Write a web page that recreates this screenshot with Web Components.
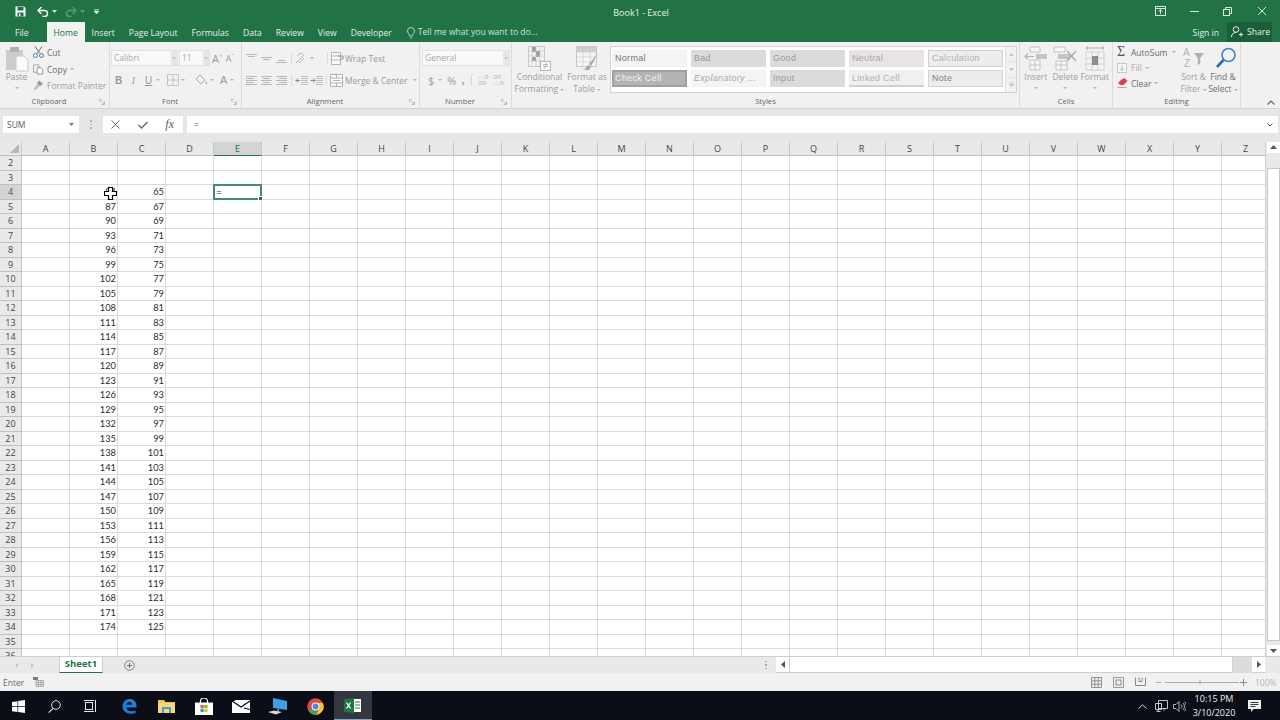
<!DOCTYPE html>
<html>
<head>
<meta charset="utf-8">
<title>Book1 - Excel</title>
<style>
    html, body { margin: 0; height: 720px; overflow: hidden; }
    body { display: flex; flex-direction: column; font-family: 'Open Sans', 'Noto Sans', sans-serif; font-size: 8.5px; }
</style>
</head>
<body>
<xl-titlebar></xl-titlebar>
<xl-tabs></xl-tabs>
<xl-ribbon></xl-ribbon>
<xl-formula-bar></xl-formula-bar>
<xl-sheet></xl-sheet>
<xl-sheet-tabs></xl-sheet-tabs>
<xl-status-bar></xl-status-bar>
<xl-taskbar></xl-taskbar>
<script>
// base: every element only gives its styles and markup
class XlElement extends HTMLElement {
    constructor() {
        super();
        this.attachShadow({ mode: 'open' });
    }
    getStyles() { return ''; }
    getMarkup() { return ''; }
    connectedCallback() {
        const template = document.createElement('template');
        template.innerHTML = `<style>${this.getStyles()}</style>${this.getMarkup()}`;
        this.shadowRoot.appendChild(template.content.cloneNode(true));
    }
}

class XlTitlebar extends XlElement {
    getStyles() {
        return `
        :host { display: flex; align-items: center; height: 22px; background: #217346; color: #fff; position: relative; flex: none; }
        svg { display: block; flex: none; }
        .qat { display: flex; align-items: center; padding-left: 15px; width: 100px; box-sizing: border-box; }
        .title { position: absolute; left: 0; right: 0; top: 0; line-height: 25px; text-align: center; font-size: 9px; padding-left: 2px; color: #e6f0ea; }
        .win { margin-left: auto; display: flex; align-items: center; padding-right: 1px; }
        .win svg { margin: 0 10px; }
        `;
    }
    getMarkup() {
        return `
        <div class="qat">
            <svg width="11" height="11" viewBox="0 0 11 11" style="margin-right:11px"><path d="M0.5 0.5h8.5l1.5 1.500v8.500h-10z" fill="#fff"/><rect x="2.5" y="1" width="6" height="3.5" fill="#217346"/><rect x="2.5" y="6.5" width="6" height="4" fill="#217346"/><rect x="4" y="7.5" width="1.5" height="2.5" fill="#fff"/></svg>
            <svg width="12" height="11" viewBox="0 0 12 11" style="margin-right:3px"><path d="M1.5 4.5h6a3 3 0 0 1 0 6h-2" fill="none" stroke="#fff" stroke-width="1.4"/><path d="M4.5 1l-3.5 3.500 3.500 3.500" fill="none" stroke="#fff" stroke-width="1.4"/></svg>
            <svg width="5" height="3" viewBox="0 0 5 3" style="margin-right:8px"><path d="M0 0h5l-2.5 3z" fill="#d8e6dd"/></svg>
            <svg width="12" height="11" viewBox="0 0 12 11" style="margin-right:3px"><path d="M10.5 4.5h-6a3 3 0 0 0 0 6h2" fill="none" stroke="#5e9a79" stroke-width="1.3"/><path d="M7.5 1l3.500 3.500-3.500 3.500" fill="none" stroke="#5e9a79" stroke-width="1.3"/></svg>
            <svg width="5" height="3" viewBox="0 0 5 3" style="margin-right:9px"><path d="M0 0h5l-2.5 3z" fill="#5e9a79"/></svg>
            <svg width="5" height="5" viewBox="0 0 5 5"><path d="M0 0.5h5M0 2h5l-2.5 3z" fill="#e6f0ea" stroke="#e6f0ea" stroke-width="0.6"/></svg>
        </div>
        <div class="title">Book1 - Excel</div>
        <div class="win">
            <svg width="11" height="10" viewBox="0 0 11 10"><rect x="0.5" y="0.5" width="10" height="9" fill="none" stroke="#d8e6dd"/><path d="M0.5 2.5h10" stroke="#d8e6dd"/><path d="M5.5 8v-4M3.5 5.5l2-2 2 2" fill="none" stroke="#d8e6dd"/></svg>
            <span style="width:1px"></span>
            <svg width="11" height="10" viewBox="0 0 11 10" style="margin-left:12px"><path d="M1 5.5h9" stroke="#d8e6dd"/></svg>
            <svg width="9" height="9" viewBox="0 0 9 9" style="margin-left:13px"><rect x="0.5" y="2.5" width="6" height="6" fill="none" stroke="#d8e6dd"/><path d="M2.5 2.5v-2h6v6h-2" fill="none" stroke="#d8e6dd"/></svg>
            <svg width="10" height="10" viewBox="0 0 10 10" style="margin-left:15px;margin-right:12px"><path d="M1 1l8 8M9 1l-8 8" stroke="#d8e6dd"/></svg>
        </div>
        `;
    }
}

class XlTabs extends XlElement {
    getStyles() {
        return `
        :host { display: flex; align-items: stretch; height: 20px; background: #217346; color: #e4efe8; flex: none; line-height: 23px; font-size: 8.6px; }
        .t { padding: 0 7px; white-space: nowrap; }
        .file { margin-left: 8px; margin-right: 11px; }
        .home { background: #f1f1f1; color: #217346; padding: 0; width: 38px; text-align: center; box-sizing: border-box; height: 21px; }
        .tell { display: flex; align-items: center; color: #cfe2d6; padding-left: 8px; }
        .tell svg { margin-right: 3px; margin-top: 1px; }
        .right { margin-left: auto; display: flex; align-items: stretch; padding-right: 8px; }
        .sign { padding-right: 8px; }
        .share { background: #1b5e3a; display: flex; align-items: center; padding-left: 4px; gap: 4px; height: 20px; width: 45px; box-sizing: border-box; }
        `;
    }
    getMarkup() {
        const names = ['Insert', 'Page Layout', 'Formulas', 'Data', 'Review', 'View', 'Developer'];
        return `
        <div class="t file">File</div>
        <div class="t home">Home</div>
        ${names.map(n => `<div class="t">${n}</div>`).join('')}
        <div class="tell">
            <svg width="8" height="12" viewBox="0 0 8 12"><path d="M2.5 9c0-2-2-3-2-5a3.500 3.500 0 0 1 7 0c0 2-2 3-2 5zM3 11h2" fill="none" stroke="#d8e6dd" stroke-width="0.8"/></svg>
            Tell me what you want to do...
        </div>
        <div class="right">
            <div class="sign">Sign in</div>
            <div class="share">
                <svg width="12" height="12" viewBox="0 0 12 12"><circle cx="5" cy="3.5" r="2.8" fill="none" stroke="#e4efe8"/><path d="M0.5 11c0-3 2-4.500 4.500-4.500M8 8.500h4M10 6.500v4" fill="none" stroke="#e4efe8"/></svg>
                <span>Share</span>
            </div>
        </div>
        `;
    }
}

class XlRibbonGroup extends XlElement {
    getStyles() {
        return `
        :host { display: flex; flex-direction: column; box-sizing: border-box; height: 66px; border-right: 1px solid #dcdcdc; flex: none; position: relative; }
        :host([launch]) .label { padding-right: 11px; }
        .body { flex: 1; display: flex; min-height: 0; }
        .label { height: 14px; line-height: 15px; text-align: center; color: #666; font-size: 7.7px; }
        .launch { position: absolute; right: 4px; bottom: 3px; display: block; }
        `;
    }
    getMarkup() {
        const launch = this.hasAttribute('launch')
            ? '<svg class="launch" width="6" height="6" viewBox="0 0 6 6"><path d="M0.5 2.5v-2h2M2 2l3 3M5.5 2.5v3h-3" fill="none" stroke="#a8a8a8" stroke-width="0.8"/></svg>'
            : '';
        return `<div class="body"><slot></slot></div><div class="label">${this.getAttribute('label')}</div>${launch}`;
    }
}

class XlRibbon extends XlElement {
    getStyles() {
        return `
        :host { display: flex; height: 66px; background: #f1f1f1; border-bottom: 1px solid #d2d2d2; flex: none; color: #8f8f8f; font-size: 8.5px; position: relative; box-sizing: content-box; }
        svg { display: block; flex: none; }
        .caret { display: inline-block; width: 0; height: 0; border: 2px solid transparent; border-top: 2.5px solid #b4b4b4; border-bottom: 0; vertical-align: middle; }
        .big { display: flex; flex-direction: column; align-items: center; text-align: center; line-height: 12px; color: #a0a0a0; font-size: 8.5px; white-space: nowrap; }
        .big > .caret { display: block; margin: 4px auto 0; }
        .small-col { display: flex; flex-direction: column; }
        .row { display: flex; align-items: center; height: 16px; white-space: nowrap; }
        .drop { box-sizing: border-box; height: 16px; background: #f9f9f9; border: 1px solid #e2e2e2; color: #a9a9a9; line-height: 14px; padding-left: 2px; position: relative; font-size: 8.5px; }
        .drop i { position: absolute; right: 0; top: 0; bottom: 0; width: 6px; background: #e6e6e6; }
        .drop i::after { content: ''; position: absolute; left: 1px; top: 6px; border: 2px solid transparent; border-top: 2px solid #c0c0c0; border-bottom: 0; }

        .clip { width: 110px; }
        .clip .big { width: 33px; padding-top: 4px; flex: none; color: #9a9a9a; }
        .clip .small-col { padding-top: 3px; color: #777; }
        .clip .row { gap: 3px; height: 14px; }
        .font { width: 132px; }
        .font .rows { padding: 8px 0 0 1px; display: flex; flex-direction: column; gap: 6px; }
        .align { width: 178px; }
        .align .rows { padding: 8px 0 0 3px; display: flex; flex-direction: column; gap: 6px; }
        .num { width: 92px; }
        .num .rows { padding: 8px 0 0 2px; display: flex; flex-direction: column; gap: 6px; }
        .sep { width: 1px; height: 12px; background: #dcdcdc; margin: 0 3px; flex: none; }

        .styles { width: 508px; }
        .styles .big { padding-top: 4px; }
        .gallery { margin: 4px 0 0 0; width: 407px; height: 47px; box-sizing: border-box; background: #fff; border: 1px solid #d4d4d4; display: flex; }
        .cells { flex: 1; display: grid; grid-template-columns: repeat(5, 75px); grid-template-rows: 17px 17px; column-gap: 4px; row-gap: 3px; padding: 3px 0 0 1px; font-family: 'Liberation Sans', sans-serif; font-size: 9px; letter-spacing: 0.3px; }
        .cells div { box-sizing: border-box; line-height: 16px; padding-left: 3px; color: #8a8a8a; white-space: nowrap; overflow: hidden; }
        .scroll { width: 10px; display: flex; flex-direction: column; background: #f1f1f1; border-left: 1px solid #e2e2e2; margin-left: 2px; }
        .scroll span { flex: 1; border-bottom: 1px solid #e2e2e2; display: flex; align-items: center; justify-content: center; }

        .cell-group { width: 93px; }
        .cell-group .big { width: 29.5px; padding-top: 4px; }
        .edit { width: 128px; }
        .edit .big { padding-top: 4px; }
        .edit .small-col { padding: 2px 0 0 4px; color: #777; width: 66px; box-sizing: border-box; flex: none; }
        .collapse { position: absolute; right: 5px; bottom: 3px; }
        `;
    }
    getMarkup() {
        const caret = '<span class="caret"></span>';
        const g = '#a9a9a9';
        const lines = (rows) => `<svg width="13" height="11" viewBox="0 0 13 11">${rows.map(r => `<path d="M${r[0]} ${r[2]}H${r[1]}" stroke="${g}" stroke-width="0.8"/>`).join('')}</svg>`;
        return `
        <xl-ribbon-group class="clip" label="Clipboard" launch>
            <div style="display:flex">
                <div class="big">
                    <svg width="24" height="26" viewBox="0 0 24 26" style="margin-bottom:-1px"><rect x="1" y="4" width="17" height="20" fill="#cdcdcd"/><rect x="5" y="1" width="9" height="5" fill="#b0b0b0"/><path d="M11 10h8l4 4v11H11z" fill="#fbfbfb" stroke="#c8c8c8"/></svg>
                    <span>Paste</span>${caret}
                </div>
                <div class="small-col">
                    <div class="row"><svg width="11" height="12" viewBox="0 0 11 12"><path d="M2 0.5l5 7M9 0.5l-5 7" stroke="#6d6d6d" fill="none"/><circle cx="2.5" cy="9.5" r="2" fill="none" stroke="#4f7fa8"/><circle cx="8.5" cy="9.5" r="2" fill="none" stroke="#4f7fa8"/></svg><span style="color:#6b6b6b">Cut</span></div>
                    <div class="row" style="margin-top:3px"><svg width="11" height="11" viewBox="0 0 12 11"><path d="M0.5 0.5h6v8h-6z" fill="#f4f4f4" stroke="#a0a0a0"/><path d="M4.5 3.5h4l2 2v5h-6z" fill="#fff" stroke="#909090"/></svg><span style="color:#6b6b6b">Copy</span>${caret}</div>
                    <div class="row" style="margin-top:2.5px"><svg width="11" height="11" viewBox="0 0 11 11"><path d="M6 0.5l4 3-3 3-3-3z" fill="#9a9a9a"/><path d="M4 4l2.5 2.500L3 10 0.5 9z" fill="#c4c4c4"/></svg><span style="color:#a0a0a0">Format Painter</span></div>
                </div>
            </div>
        </xl-ribbon-group>

        <xl-ribbon-group class="font" label="Font" launch>
            <div class="rows">
                <div class="row">
                    <div class="drop" style="width:67px">Calibri<i></i></div>
                    <div class="drop" style="width:31px;margin-left:1px">11<i></i></div>
                    <span style="color:#9c9c9c;font-size:11px;margin-left:2px">A<sup style="font-size:6px;line-height:0">^</sup></span>
                    <span style="color:#9c9c9c;font-size:9.5px;margin-left:3px">A<sup style="font-size:6px;line-height:0">ˇ</sup></span>
                </div>
                <div class="row" style="font-size:10px;color:#9a9a9a">
                    <b style="width:15px;text-align:center;font-family:'Liberation Sans'">B</b>
                    <i style="width:15px;text-align:center;font-family:'Liberation Serif'">I</i>
                    <u style="width:15px;text-align:center;font-family:'Liberation Sans'">U</u>
                    ${caret}
                    <svg width="12" height="12" viewBox="0 0 12 12" style="margin-left:7px"><path d="M0.5 0.5h11v11h-11zM6 0.5v11M0.5 6h11" fill="none" stroke="#c4c4c4"/></svg>
                    <span style="margin-left:2px;line-height:0">${caret}</span>
                    <svg width="13" height="12" viewBox="0 0 13 12" style="margin-left:10px"><path d="M5 1l5 5-4 4-5-5z" fill="none" stroke="#a9a9a9"/><path d="M11 7c1 1.500 1.500 2.500 0.5 3.500-1 0-1-2-0.5-3.500z" fill="#a9a9a9"/></svg>
                    <span style="margin-left:2px;line-height:0">${caret}</span>
                    <span style="margin-left:6px;font-size:11px;font-family:'Liberation Sans'">A</span>
                    <span style="margin-left:3px;line-height:0">${caret}</span>
                </div>
            </div>
        </xl-ribbon-group>

        <xl-ribbon-group class="align" label="Alignment" launch>
            <div class="rows">
                <div class="row">
                    ${lines([[1, 12, 1.5], [3, 10, 3.5]])}
                    <span style="width:2px"></span>${lines([[1, 12, 4.5], [3, 10, 6.5]])}
                    <span style="width:2px"></span>${lines([[3, 10, 7.5], [1, 12, 9.5]])}
                    <div class="sep"></div>
                    <svg width="12" height="12" viewBox="0 0 12 12"><path d="M1 11L8 4M4 11L9 6M2 4l4-3 3 3" fill="none" stroke="#b4b4b4"/></svg>
                    <span style="margin-left:3px;line-height:0">${caret}</span>
                    <div class="sep" style="margin:0 1px 0 13px"></div>
                    <svg width="13" height="13" viewBox="0 0 13 13" style="margin-left:2px"><path d="M0.5 0.5h9v12h-9zM0.5 4h9M0.5 8h9" fill="#fafafa" stroke="#b4b4b4"/><path d="M7 4h5v3h-3" fill="none" stroke="#909090"/></svg>
                    <span style="margin-left:1px;color:#9a9a9a">Wrap Text</span>
                </div>
                <div class="row">
                    ${lines([[1, 12, 1.5], [1, 9, 3.5], [1, 12, 5.5], [1, 9, 7.5], [1, 12, 9.5]])}
                    <span style="width:2px"></span>${lines([[1, 12, 1.5], [3, 10, 3.5], [1, 12, 5.5], [3, 10, 7.5], [1, 12, 9.5]])}
                    <span style="width:2px"></span>${lines([[1, 12, 1.5], [4, 12, 3.5], [1, 12, 5.5], [4, 12, 7.5], [1, 12, 9.5]])}
                    <div class="sep"></div>
                    <svg width="13" height="11" viewBox="0 0 13 11"><path d="M6 1.5h7M6 3.5h7M6 5.5h7M6 7.5h7M6 9.5h7" stroke="#b4b4b4" stroke-width="0.8"/><path d="M5 5.5H0.5M3 3.5l-2 2 2 2" fill="none" stroke="#6f93b5"/></svg>
                    <svg width="13" height="11" viewBox="0 0 13 11" style="margin-left:2px"><path d="M6 1.5h7M6 3.5h7M6 5.5h7M6 7.5h7M6 9.5h7" stroke="#b4b4b4" stroke-width="0.8"/><path d="M0.5 5.5H5M3 3.5l2 2-2 2" fill="none" stroke="#6f93b5"/></svg>
                    <div class="sep"></div>
                    <svg width="13" height="13" viewBox="0 0 13 13"><path d="M0.5 0.5h12v12h-12zM0.5 4h12M0.5 9h12M6.500 0.5V4M6.500 9v3.500M3 6.500h7" fill="#fafafa" stroke="#b4b4b4"/></svg>
                    <span style="margin-left:2px;color:#9a9a9a">Merge &amp; Center</span>
                    <span style="margin-left:5px;line-height:0">${caret}</span>
                </div>
            </div>
        </xl-ribbon-group>

        <xl-ribbon-group class="num" label="Number" launch>
            <div class="rows">
                <div class="row"><div class="drop" style="width:88px">General<i></i></div></div>
                <div class="row" style="color:#a0a0a0;padding-left:6px;font-size:11px">
                    <span>$</span>
                    <span style="margin-left:4px;line-height:0">${caret}</span>
                    <span style="margin-left:5px;font-size:11px">%</span>
                    <b style="margin-left:5px;font-size:11px;font-family:'Liberation Sans'">,</b>
                    <div class="sep" style="margin:0 5px 0 7px"></div>
                    <span style="font-size:6px;line-height:6px;color:#a8a8a8;width:15px">←.0<br>.00</span>
                    <span style="font-size:6px;line-height:6px;color:#a8a8a8">.00<br>→.0</span>
                </div>
            </div>
        </xl-ribbon-group>

        <xl-ribbon-group class="styles" label="Styles">
            <div style="display:flex">
                <div class="big" style="width:55px;flex:none">
                    <svg width="23" height="25" viewBox="0 0 23 25"><path d="M0.5 0.5h16v20h-16z" fill="#f1f1f1" stroke="#c8c8c8"/><path d="M4 1h4v5H4zM8 5h4v6H8zM4 11h4v4H4z" fill="#9a9a9a"/><path d="M0.5 5h16M0.5 10h16M0.5 15h16M4 0.5v20M8 0.5v20M12 0.5v20" stroke="#c8c8c8" stroke-width="0.6"/><rect x="12.5" y="15.5" width="10" height="9" fill="#fbfbfb" stroke="#b4b4b4"/><path d="M15 20.500h5M15 18.500h5M19 17l-3 6" stroke="#a0a0a0" stroke-width="0.7"/></svg>
                    <span>Conditional</span><span>Formatting ${caret}</span>
                </div>
                <div class="big" style="width:40px;flex:none">
                    <svg width="23" height="25" viewBox="0 0 23 25"><path d="M0.5 0.5h20v20h-20z" fill="#f5f5f5" stroke="#c8c8c8"/><path d="M1 1h19v5H1z" fill="#d0d0d0"/><path d="M0.5 6h20M0.5 11h20M0.5 16h20M7 0.5v20M14 0.5v20" stroke="#c8c8c8" stroke-width="0.6"/><path d="M22 7L13 18l2 2zM12 19l3 2-2 3H8z" fill="#a8a8a8"/></svg>
                    <span>Format as</span><span>Table ${caret}</span>
                </div>
                <div class="gallery" style="margin-left:3px">
                    <div class="cells">
                        <div style="background:#f6f3f5;color:#767676">Normal</div>
                        <div style="background:#dddadc;color:#9a9a9a">Bad</div>
                        <div style="background:#dddadc;color:#9a9a9a">Good</div>
                        <div style="background:#e8e4e6;color:#a8a8a8">Neutral</div>
                        <div style="background:#efecee;border:1px solid #cfcfcf;color:#b0b0b0;line-height:14px">Calculation</div>
                        <div style="background:#b5b4b5;border:2px solid #a0a0a0;color:#f2f2f2;line-height:13px;padding-left:1px">Check Cell</div>
                        <div style="background:#f6f3f5;color:#a8a8a8;font-style:italic">Explanatory ...</div>
                        <div style="background:#dddadc;color:#9a9a9a">Input</div>
                        <div style="background:#f2eff1;border-bottom:2px solid #d4d0d2;color:#b0b0b0">Linked Cell</div>
                        <div style="background:#ececec;border:1px solid #d4d4d4;color:#808080;line-height:15px">Note</div>
                    </div>
                    <div class="scroll">
                        <span><svg width="5" height="3" viewBox="0 0 5 3"><path d="M2.5 0L5 3H0z" fill="#c4c4c4"/></svg></span>
                        <span><svg width="5" height="3" viewBox="0 0 5 3"><path d="M0 0h5L2.500 3z" fill="#c4c4c4"/></svg></span>
                        <span style="border:0"><svg width="5" height="6" viewBox="0 0 5 6"><path d="M0 0.5h5M0 2h5L2.500 5z" fill="#c4c4c4" stroke="#c4c4c4" stroke-width="0.5"/></svg></span>
                    </div>
                </div>
            </div>
        </xl-ribbon-group>

        <xl-ribbon-group class="cell-group" label="Cells">
            <div style="display:flex;padding-left:1px">
                <div class="big">
                    <svg width="24" height="25" viewBox="0 0 24 25"><path d="M6 1h10v5H6zM6 14h10v10H6zM6 19h10M11 14v10" fill="#f6f6f6" stroke="#c4c4c4"/><rect x="12" y="8" width="11" height="5" fill="#c4c4c4"/><path d="M10 10.500H1M4 7.500l-3 3 3 3" fill="none" stroke="#b4b4b4" stroke-width="1.2"/></svg>
                    <span>Insert</span>${caret}
                </div>
                <div class="big">
                    <svg width="24" height="25" viewBox="0 0 24 25"><path d="M1 1h11v5H1zM3 15h11v9H3zM3 19h11M8 15v9" fill="#f6f6f6" stroke="#c4c4c4"/><rect x="5" y="8" width="12" height="5" fill="#c4c4c4"/><path d="M14 5l9 10M23 5l-9 10" stroke="#a4a4a4" stroke-width="1.2"/></svg>
                    <span>Delete</span>${caret}
                </div>
                <div class="big">
                    <svg width="24" height="25" viewBox="0 0 24 25"><path d="M3 6h18v18H3zM3 12h18M3 18h18M9 6v18M15 6v18" fill="#f4f4f4" stroke="#c8c8c8" stroke-width="0.8"/><rect x="9" y="10" width="6" height="9" fill="#8e8e8e"/><path d="M3 2h18M3 2l2-1.500M3 2l2 1.500M21 2l-2-1.500M21 2l-2 1.500" fill="none" stroke="#a4a4a4" stroke-width="0.8"/></svg>
                    <span>Format</span>${caret}
                </div>
            </div>
        </xl-ribbon-group>

        <xl-ribbon-group class="edit" label="Editing">
            <div style="display:flex">
                <div class="small-col">
                    <div class="row"><span style="font-size:14px;color:#555;font-family:'Liberation Serif';width:14px;line-height:14px">Σ</span><span style="width:36px;color:#6b6b6b">AutoSum</span><span style="margin-left:5px;line-height:0">${caret}</span></div>
                    <div class="row" style="color:#a8a8a8;height:15px"><svg width="10" height="10" viewBox="0 0 10 10"><rect x="0.5" y="0.5" width="9" height="9" fill="#f8f8f8" stroke="#c8c8c8"/><path d="M5 2v5.500M3 5.500l2 2 2-2" fill="none" stroke="#9fb6cb"/></svg><span style="margin-left:4px">Fill</span><span style="margin-left:3px;line-height:0">${caret}</span></div>
                    <div class="row" style="color:#6b6b6b"><svg width="11" height="10" viewBox="0 0 11 10"><path d="M4.5 1.500l3-1.500 3 3-4 4H3.500L1 5z" fill="#d6424f"/><path d="M0.5 9.500h9" stroke="#e59aa0"/></svg><span style="margin-left:3px">Clear</span><span style="margin-left:3px;line-height:0">${caret}</span></div>
                </div>
                <div class="big" style="width:29px;flex:none">
                    <svg width="22" height="25" viewBox="0 0 22 25"><path d="M11 7h10l-3.800 5v5.500l-2.400 1.500V12z" fill="#b0b0b0"/><text x="0" y="10" font-size="10" fill="#b4b4b4" font-family="Liberation Sans">A</text><text x="1" y="21" font-size="10" fill="#b4b4b4" font-family="Liberation Sans">Z</text></svg>
                    <span>Sort &amp;</span><span>Filter ${caret}</span>
                </div>
                <div class="big" style="width:30px;flex:none;color:#6e6e6e">
                    <svg width="22" height="25" viewBox="0 0 22 25" style="margin-left:5px"><circle cx="13.5" cy="9" r="6.500" fill="none" stroke="#4383c0" stroke-width="1.6"/><path d="M8.500 14L2 21" stroke="#2f6ea8" stroke-width="2.6"/></svg>
                    <span>Find &amp;</span><span>Select ${caret}</span>
                </div>
            </div>
        </xl-ribbon-group>
        <svg class="collapse" width="8" height="5" viewBox="0 0 8 5"><path d="M0.5 4.500L4 1l3.500 3.500" fill="none" stroke="#666" stroke-width="1.1"/></svg>
        `;
    }
}

class XlFormulaBar extends XlElement {
    getStyles() {
        return `
        :host { display: flex; height: 33px; box-sizing: border-box; padding: 7px 2px 9px 3px; background: #e6e6e6; flex: none; color: #5a5a5a; font-size: 8.5px; }
        .box { background: #fff; height: 17px; display: flex; align-items: center; position: relative; }
        .name { width: 76px; padding: 0 5px 0 4px; box-sizing: border-box; justify-content: space-between; }
        .dots { width: 24px; display: flex; flex-direction: column; align-items: center; justify-content: center; gap: 2px; }
        .dots span { width: 1.5px; height: 1.5px; background: #b4b4b4; }
        .fx { width: 80px; justify-content: space-between; padding: 0 9px 0 8px; box-sizing: border-box; font-family: 'Liberation Serif', serif; font-style: italic; font-size: 12px; }
        .input { flex: 1; margin-left: 4px; padding: 0 5px 0 7px; justify-content: space-between; }
        svg { display: block; }
        `;
    }
    getMarkup() {
        const chevron = '<svg width="6" height="4" viewBox="0 0 6 4"><path d="M0.5 0.5L3 3l2.500-2.500" fill="none" stroke="#555"/></svg>';
        return `
        <div class="box name"><span>SUM</span><svg width="5" height="3" viewBox="0 0 5 3"><path d="M0 0h5L2.500 3z" fill="#777"/></svg></div>
        <div class="dots"><span></span><span></span><span></span></div>
        <div class="box fx">
            <svg width="9" height="9" viewBox="0 0 9 9"><path d="M0.5 0.5l8 8M8.500 0.5l-8 8" stroke="#666"/></svg>
            <svg width="10" height="8" viewBox="0 0 10 8"><path d="M0.5 4l3 3 6-6" fill="none" stroke="#666" stroke-width="1.3"/></svg>
            <span>fx</span>
        </div>
        <div class="box input"><span>=</span>${chevron}</div>
        `;
    }
}

class XlSheet extends XlElement {
    getStyles() {
        return `
        :host { display: flex; height: 514px; overflow: hidden; flex: none; background: #fff; position: relative; }
        .wrap { width: 1265px; height: 514px; overflow: hidden; position: relative; flex: none; }
        .grid { display: grid; grid-template-columns: 22px repeat(26, 48px); grid-auto-rows: 14.5px; grid-template-rows: 14px; width: 1270px; font-family: Lato, 'Liberation Sans', sans-serif; font-size: 9.3px; color: #2a2a2a; }
        .c { box-sizing: border-box; border-right: 1px solid #dadada; border-bottom: 1px solid #dadada; text-align: right; padding-right: 1px; line-height: 13px; overflow: hidden; }
        .h { background: #e9e9e9; border-right: 1px solid #c8c8c8; border-bottom: 1px solid #c0c0c0; text-align: center; padding: 0; line-height: 13px; color: #444; font-family: 'Open Sans', sans-serif; font-size: 9px; }
        .rh { line-height: 14px; }
        .h.on { background: #d4d4d4; color: #1f6e43; }
        .colh.on { border-bottom: 1px solid #217346; }
        .corner { position: relative; }
        .corner::after { content: ''; position: absolute; right: 2px; bottom: 2px; border-left: 9px solid transparent; border-bottom: 9px solid #b8b8b8; }
        .active { position: absolute; left: 213px; top: 42px; width: 49px; height: 16px; box-sizing: border-box; border: 2px solid #4a8a68; font-family: Lato, sans-serif; font-size: 10px; line-height: 13px; padding-left: 1px; color: #222; background: #fff; }
        .active::after { content: ''; position: absolute; right: -3px; bottom: -3px; width: 3px; height: 3px; background: #217346; border: 1px solid #fff; }
        .cursor { position: absolute; left: 104px; top: 45px; }
        .vbar { flex: 1; background: #e9e9e9; border-left: 1px solid #d0d0d0; display: flex; flex-direction: column; align-items: center; }
        .vbar .arrow { width: 13px; height: 11px; background: #fff; display: flex; align-items: center; justify-content: center; }
        .thumb { width: 13px; box-sizing: border-box; background: #fff; border: 1px solid #c8c8c8; height: 476px; margin: 15px 0 4px; }
        `;
    }
    getMarkup() {
        const letters = 'ABCDEFGHIJKLMNOPQRSTUVWXYZ'.split('');
        let cells = '<div class="c h corner"></div>';
        letters.forEach(l => { cells += `<div class="c h colh${l === 'E' ? ' on' : ''}">${l}</div>`; });
        for (let r = 2; r <= 36; r++) {
            cells += `<div class="c h rh${r === 4 ? ' on' : ''}">${r}</div>`;
            letters.forEach(l => {
                let v = '';
                if (r >= 4 && r <= 34 && l === 'B') v = 84 + (r - 4) * 3;
                if (r >= 4 && r <= 34 && l === 'C') v = 65 + (r - 4) * 2;
                cells += `<div class="c">${v}</div>`;
            });
        }
        return `
        <div class="wrap">
            <div class="grid">${cells}</div>
            <div class="active">=</div>
            <svg class="cursor" width="13" height="13" viewBox="0 0 13 13"><path d="M4.5 0.5h4v4h4v4h-4v4h-4v-4h-4v-4h4z" fill="#fff" stroke="#000" stroke-width="1.2"/></svg>
        </div>
        <div class="vbar">
            <div class="arrow"><svg width="7" height="4" viewBox="0 0 7 4"><path d="M3.5 0L7 4H0z" fill="#555"/></svg></div>
            <div class="thumb"></div>
            <div class="arrow"><svg width="7" height="4" viewBox="0 0 7 4"><path d="M0 0h7L3.500 4z" fill="#555"/></svg></div>
        </div>
        `;
    }
}

class XlSheetTabs extends XlElement {
    getStyles() {
        return `
        :host { display: flex; align-items: stretch; height: 17px; background: #e9e9e9; border-top: 1px solid #cfcfcf; box-sizing: border-box; flex: none; }
        svg { display: block; flex: none; }
        .nav { width: 59px; display: flex; align-items: center; padding-left: 15px; gap: 13px; box-sizing: border-box; }
        .tab { width: 44px; box-sizing: border-box; background: #fff; color: #217346; font-weight: 700; text-align: center; line-height: 14px; border-bottom: 1px solid #217346; border-left: 1px solid #d0d0d0; border-right: 1px solid #d0d0d0; font-size: 9.5px; height: 16px; }
        .add { margin-left: 21px; align-self: center; }
        .dots { margin-left: auto; width: 20px; display: flex; flex-direction: column; align-items: center; justify-content: center; gap: 2px; }
        .dots span { width: 1.5px; height: 1.5px; background: #aaa; }
        .hbar { width: 504px; display: flex; align-items: stretch; padding-right: 15px; box-sizing: border-box; background: #e9e9e9; }
        .hbar .arrow { width: 13px; background: #fff; display: flex; align-items: center; justify-content: center; border-bottom: 1px solid #d0d0d0; flex: none; }
        .thumb { flex: none; width: 444px; background: #fff; border: 1px solid #d0d0d0; border-top: 0; box-sizing: border-box; }
        .track { flex: 1; background: #dcdcdc; }
        `;
    }
    getMarkup() {
        return `
        <div class="nav">
            <svg width="3" height="5" viewBox="0 0 3 5"><path d="M3 0v5L0 2.500z" fill="#c4c4c4"/></svg>
            <svg width="3" height="5" viewBox="0 0 3 5"><path d="M0 0v5l3-2.500z" fill="#c4c4c4"/></svg>
        </div>
        <div class="tab">Sheet1</div>
        <svg class="add" width="11" height="11" viewBox="0 0 11 11"><circle cx="5.5" cy="5.5" r="4.8" fill="none" stroke="#808080"/><path d="M5.5 3v5M3 5.5h5" stroke="#707070"/></svg>
        <div class="dots"><span></span><span></span><span></span></div>
        <div class="hbar">
            <div class="arrow"><svg width="4" height="7" viewBox="0 0 4 7"><path d="M4 0v7L0 3.500z" fill="#555"/></svg></div>
            <div class="thumb"></div>
            <div class="track"></div>
            <div class="arrow"><svg width="4" height="7" viewBox="0 0 4 7"><path d="M0 0v7l4-3.500z" fill="#555"/></svg></div>
        </div>
        `;
    }
}

class XlStatusBar extends XlElement {
    getStyles() {
        return `
        :host { display: flex; align-items: center; height: 18px; background: #f1f1f1; flex: none; color: #6a6a6a; font-size: 8.5px; padding: 0 5px 0 3px; box-sizing: border-box; }
        svg { display: block; flex: none; }
        .right { margin-left: auto; display: flex; align-items: center; }
        `;
    }
    getMarkup() {
        return `
        <span>Enter</span>
        <svg style="margin-left:9px" width="11" height="10" viewBox="0 0 11 10"><path d="M3 3.500h7.500v6H3zM3 5.500h7.500M3 7.500h7.500M5.500 3.500v6M8 3.500v6" fill="none" stroke="#9a9a9a" stroke-width="0.8"/><rect x="0" y="0" width="5" height="3" fill="#7a7a7a"/></svg>
        <div class="right">
            <svg width="11" height="11" viewBox="0 0 11 11"><path d="M0.5 0.5h10v10h-10zM0.5 3.800h10M0.5 7.200h10M3.800 0.5v10M7.200 0.5v10" fill="none" stroke="#888" stroke-width="0.9"/></svg>
            <svg style="margin-left:11px" width="11" height="11" viewBox="0 0 11 11"><path d="M0.5 0.5h10v10h-10z" fill="none" stroke="#999"/><rect x="3" y="3" width="5" height="5" fill="none" stroke="#888"/></svg>
            <svg style="margin-left:11px" width="11" height="11" viewBox="0 0 11 11"><path d="M0.5 0.5v8h10v-8M4 0.5v4h3v-4" fill="none" stroke="#888"/></svg>
            <svg style="margin-left:9px" width="92" height="9" viewBox="0 0 92 9"><path d="M1 4.500h5M10 4.500h74" stroke="#ababab"/><path d="M45 2.500v4" stroke="#ababab"/><path d="M88.500 1v7M85 4.500h7" stroke="#8a8a8a"/></svg>
            <span style="margin-left:8px;width:20px;color:#b8b8b8">100%</span>
        </div>
        `;
    }
}

class XlTaskbar extends XlElement {
    getStyles() {
        return `
        :host { display: flex; align-items: center; height: 30px; background: #0b0d17; flex: none; color: #e8e8e8; font-size: 9px; }
        svg { display: block; flex: none; }
        .slot { width: 37.3px; height: 30px; display: flex; align-items: center; justify-content: center; flex: none; box-sizing: border-box; }
        .sys { width: 36px; }
        .gap { width: 2.5px; flex: none; }
        .active { background: #34373d; border-bottom: 2px solid #7aa6d0; }
        .tray { margin-left: auto; display: flex; align-items: center; }
        .clock { width: 52px; text-align: center; line-height: 14px; margin-left: 2px; color: #f0f0f0; }
        `;
    }
    getMarkup() {
        return `
        <div class="slot sys"><svg width="13" height="13" viewBox="0 0 13 13"><path d="M0 2l5.500-.8v5H0zM6.200 1.100L13 0v6.200H6.200zM0 7h5.500v5L0 11.200zM6.200 7H13v6l-6.800-.9z" fill="#fff"/></svg></div>
        <div class="slot sys"><svg width="13" height="13" viewBox="0 0 13 13"><circle cx="8" cy="5" r="4.300" fill="none" stroke="#e8e8e8"/><path d="M5 8.300L0.700 12.600" stroke="#e8e8e8" stroke-width="1.1"/></svg></div>
        <div class="slot sys"><svg width="13" height="12" viewBox="0 0 13 12"><rect x="1.5" y="2.500" width="7" height="7" fill="none" stroke="#e8e8e8"/><path d="M0 0.5h10M0 11.500h10M11.500 0v12" stroke="#e8e8e8"/></svg></div>
        <div class="gap"></div>
        <div class="slot"><svg width="15" height="15" viewBox="0 0 15 15"><path d="M14.500 8.500H4.500c0 3 3.500 5 9 3v2.500c-7 2.300-13-1-13-6.500C.5 2.500 4 0 7.800 0 12 0 15 3 14.500 8.500zM10 5.800c0-1.500-1-2.800-2.700-2.800-1.500 0-2.600 1.200-2.800 2.800z" fill="#1b7fd6"/></svg></div>
        <div class="slot"><svg width="17" height="14" viewBox="0 0 17 14"><path d="M0 1h6l1.500 2H17v11H0z" fill="#f0c64d"/><rect x="0" y="4" width="17" height="10" fill="#f7d774"/><rect x="4" y="8" width="9" height="6" fill="#3f9fd8"/><rect x="6" y="10" width="5" height="4" fill="#f7d774"/></svg></div>
        <div class="slot"><svg width="18" height="17" viewBox="0 0 18 17"><path d="M0 4.500h18V17H0z" fill="#fff"/><path d="M5.500 5V3a3.500 3 0 0 1 7 0v2" fill="none" stroke="#fff" stroke-width="1.2"/><rect x="5.500" y="7" width="3.200" height="3.200" fill="#e8532b"/><rect x="9.300" y="7" width="3.200" height="3.200" fill="#76b82a"/><rect x="5.500" y="10.800" width="3.200" height="3.200" fill="#1b9fe0"/><rect x="9.300" y="10.800" width="3.200" height="3.200" fill="#fbbc09"/></svg></div>
        <div class="slot"><svg width="18" height="13" viewBox="0 0 18 13"><path d="M0 2l4-2h14v13H0z" fill="#fff"/><path d="M0 1l9 6 9-6M12 8l6 1.500" fill="none" stroke="#0b0d17" stroke-width="1.2"/></svg></div>
        <div class="slot"><svg width="20" height="17" viewBox="0 0 20 17"><path d="M5 0l14 3v9l-14-2z" fill="#3ba0e6"/><path d="M10 11v3" stroke="#ddd"/><path d="M0 14l6-1.500 8 1.500-6 2.500z" fill="#d8d8d8"/></svg></div>
        <div class="slot"><svg width="17" height="17" viewBox="0 0 17 17"><circle cx="8.500" cy="8.500" r="8.300" fill="#dd4b3e"/><path d="M8.500 8.500L1.600 13a8.300 8.300 0 0 0 7.500 3.900z" fill="#3ba558"/><path d="M8.500 5h7.300a8.300 8.300 0 0 1-6.700 11.900L12 11z" fill="#f6c533"/><circle cx="8.500" cy="8.500" r="3.900" fill="#fff"/><circle cx="8.500" cy="8.500" r="3" fill="#4688f1"/></svg></div>
        <div class="slot active"><svg width="18" height="15" viewBox="0 0 18 15"><rect x="6" y="1" width="11" height="13" fill="#fff"/><path d="M11 4h5M11 7h5M11 10h5M8 4h2M8 7h2M8 10h2" stroke="#2a7d4f"/><path d="M0 1l10-1v15L0 14z" fill="#217346"/><path d="M2.500 4.500l4 6M6.500 4.500l-4 6" stroke="#fff" stroke-width="1.3"/></svg></div>
        <div class="tray">
            <svg width="9" height="5" viewBox="0 0 9 5"><path d="M0.5 4.500L4.500 0.800l4 3.700" fill="none" stroke="#d8d8d8"/></svg>
            <svg style="margin-left:8px" width="13" height="12" viewBox="0 0 13 12"><path d="M3.500 0.500h9v8h-9zM0.500 3.500h6v6h-6zM3 9.500v2M1.500 11.500h4M9 8.500v2" fill="#0b0d17" stroke="#d8d8d8" stroke-width="0.9"/></svg>
            <svg style="margin-left:5px" width="13" height="11" viewBox="0 0 13 11"><path d="M0.5 3.500h2.500l3-3v10l-3-3H0.500zM8 3.500a2.500 2.500 0 0 1 0 4M9.800 2a4.500 4.500 0 0 1 0 7M11.500 0.800a6.500 6.500 0 0 1 0 9.400" fill="none" stroke="#d8d8d8" stroke-width="0.8"/></svg>
            <div class="clock">10:15 PM<br>3/10/2020</div>
            <svg style="margin:0 19px 0 8px" width="13" height="12" viewBox="0 0 13 12"><path d="M0 0h13v9H5.500L3 12V9H0z" fill="#f0f0f0"/><path d="M2.500 2.500h8M2.500 4.500h8M2.500 6.500h5" stroke="#0b0d17" stroke-width="0.8"/></svg>
        </div>
        `;
    }
}

customElements.define('xl-titlebar', XlTitlebar);
customElements.define('xl-tabs', XlTabs);
customElements.define('xl-ribbon-group', XlRibbonGroup);
customElements.define('xl-ribbon', XlRibbon);
customElements.define('xl-formula-bar', XlFormulaBar);
customElements.define('xl-sheet', XlSheet);
customElements.define('xl-sheet-tabs', XlSheetTabs);
customElements.define('xl-status-bar', XlStatusBar);
customElements.define('xl-taskbar', XlTaskbar);
</script>
</body>
</html>
